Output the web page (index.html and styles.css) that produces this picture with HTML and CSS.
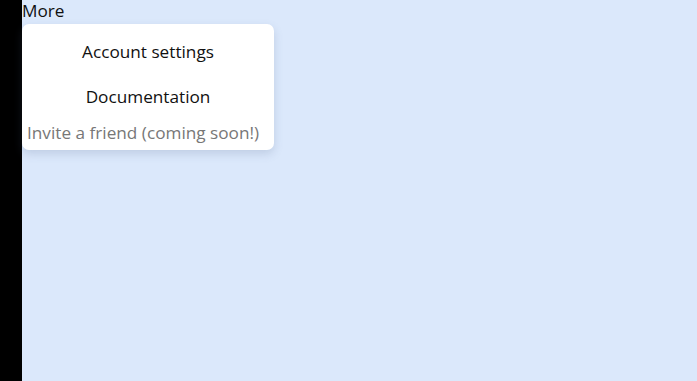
FILE: index.html
```html
<!DOCTYPE html>
<html>
<head>
<meta charset="utf-8">
<link rel="stylesheet" href="styles.css">
</head>
<body>
<div class="layout">
  <aside class="sidebar"></aside>
  <main class="main">
    <div class="more">More</div>
    <div class="menu">
      <div class="item">Account settings</div>
      <div class="item">Documentation</div>
      <div class="item disabled">Invite a friend (coming soon!)</div>
    </div>
  </main>
</div>
</body>
</html>
```
FILE: styles.css
```css
html, body {
  margin: 0;
  padding: 0;
  height: 100%;
}
body {
  font-family: "Open Sans", "Noto Sans", sans-serif;
  font-size: 17.2px;
  color: #111;
}
.layout {
  display: flex;
  height: 100%;
}
.sidebar {
  width: 22px;
  background: #000;
  flex: none;
}
.main {
  flex: 1;
  background: #dbe8fb;
}
.more {
  line-height: 21px;
}
.menu {
  margin-top: 3px;
  width: 252px;
  background: #fff;
  border-radius: 7px;
  box-shadow: 0 4px 10px rgba(80, 100, 140, 0.2);
  display: flex;
  flex-direction: column;
  gap: 5px;
  padding: 8px 0 6px;
  box-sizing: border-box;
}
.item {
  text-align: center;
  line-height: 20px;
  padding: 10px 0;
}
.item.disabled {
  padding: 0 0 0 5px;
  text-align: left;
  line-height: 22px;
  color: #777;
}
```
